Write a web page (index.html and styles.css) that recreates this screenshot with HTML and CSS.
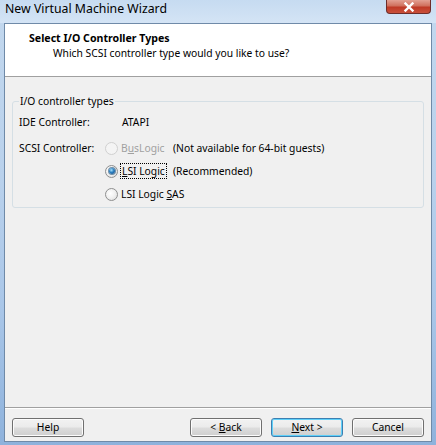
FILE: index.html
```html
<!DOCTYPE html>
<html>
<head>
<meta charset="utf-8">
<link rel="stylesheet" href="styles.css">
</head>
<body>
<div class="window">
  <div class="titlebar">
    <span class="title">New Virtual Machine Wizard</span>
    <div class="close"><svg width="14" height="10" viewBox="0 0 14 10"><path d="M3.5 1.5 L10.5 8.5 M10.5 1.5 L3.5 8.5" stroke="#fff" stroke-width="2.4" stroke-linecap="square"/></svg></div>
  </div>
  <div class="client">
    <div class="header">
      <div class="h-title">Select I/O Controller Types</div>
      <div class="h-sub">Which SCSI controller type would you like to use?</div>
    </div>
    <div class="main">
      <fieldset class="group">
        <legend>I/O controller types</legend>
        <div class="grid">
          <div class="lbl">IDE Controller:</div>
          <div class="val">ATAPI</div>
          <div class="lbl r2">SCSI Controller:</div>
          <div class="opt disabled r2 c2"><span class="radio"></span><span>B<span class="u">u</span>sLogic</span></div>
          <div class="note r2">(Not available for 64-bit guests)</div>
          <div class="opt r3 c2"><span class="radio checked"><span class="dot"></span></span><span class="focus"><span class="u">L</span>SI Logic</span></div>
          <div class="note r3">(Recommended)</div>
          <div class="opt r4 span"><span class="radio"></span><span>LSI Logic <span class="u">S</span>AS</span></div>
        </div>
      </fieldset>
    </div>
    <div class="footer">
      <button class="btn">Help</button>
      <div class="spacer"></div>
      <button class="btn">&lt; <span class="u">B</span>ack</button>
      <button class="btn default"><span class="u">N</span>ext &gt;</button>
      <button class="btn">Cancel</button>
    </div>
  </div>
</div>
</body>
</html>
```
FILE: styles.css
```css
html, body {
  margin: 0;
  padding: 0;
}
body {
  width: 436px;
  height: 445px;
  overflow: hidden;
  font-family: "Noto Sans", "Open Sans", sans-serif;
  font-size: 10.3px;
  color: #000;
}
.window {
  width: 436px;
  height: 445px;
  display: flex;
  flex-direction: column;
  background: linear-gradient(to bottom, #c3d8ee 0%, #b9d1ec 40%, #a9c6e8 70%, #8eb2dc 100%);
}
.titlebar {
  height: 23px;
  display: flex;
  align-items: flex-start;
  background: linear-gradient(to bottom, #c6dbf1, #d4e4f5);
}
.title {
  padding-left: 5px;
  padding-top: 1px;
  font-size: 12.3px;
  line-height: 15px;
  color: #000;
}
.close {
  margin-left: auto;
  margin-right: 5px;
  width: 45px;
  height: 14px;
  border: 1px solid #6d2d2a;
  border-top: none;
  border-radius: 0 0 4px 4px;
  background: linear-gradient(to bottom, #e3a193 0%, #d0705d 45%, #bf3a26 55%, #c9503b 100%);
  display: flex;
  align-items: center;
  justify-content: center;
  box-sizing: border-box;
}
.close svg { display: block; }
.client {
  flex: 1;
  margin: 0 4px 3px 4px;
  border: 1px solid #6f8aa8;
  display: flex;
  flex-direction: column;
  background: #f0f0f0;
}
.header {
  height: 52px;
  background: #fff;
  border-bottom: 1px solid #a0a0a0;
  padding-left: 24px;
}
.h-title {
  font-weight: bold;
  padding-top: 7px;
  line-height: 15px;
  font-size: 10.6px;
}
.h-sub {
  padding-left: 24px;
  line-height: 15px;
}
.main {
  flex: 1;
  padding: 17px 7px 0 7px;
  border-bottom: 1px solid #a0a0a0;
}
.group {
  margin: 0;
  padding: 0 0 0 6px;
  border: 1px solid #d5dfe5;
  border-radius: 3px;
  height: 114px;
  box-sizing: border-box;
  min-width: 0;
}
.group legend {
  padding: 0 1px;
  line-height: 14px;
  margin-left: 0;
}
.grid {
  display: grid;
  grid-template-columns: 86px 68px 1fr;
  grid-template-rows: 28px 24px 22px 24px;
  align-items: center;
  margin-top: 0;
}
.lbl { grid-column: 1; }
.val { grid-column: 2 / 4; padding-left: 17px; }
.r2 { grid-row: 2; }
.r3 { grid-row: 3; }
.r4 { grid-row: 4; }
.c2 { grid-column: 2; }
.span { grid-column: 2 / 4; }
.opt {
  display: flex;
  align-items: center;
  gap: 3px;
  white-space: nowrap;
}
.note { grid-column: 3; padding-left: 0; white-space: nowrap; }
.disabled { color: #a0a0a0; }
.u { text-decoration: underline; }
.radio {
  width: 11px;
  height: 11px;
  border: 1px solid #8e8f8f;
  border-radius: 50%;
  background: radial-gradient(circle at 40% 40%, #ffffff 0%, #f0f0f0 50%, #d8d8d8 100%);
  display: inline-flex;
  align-items: center;
  justify-content: center;
  flex: none;
}
.disabled .radio {
  border-color: #d0d0d0;
  background: #f4f4f4;
}
.radio .dot {
  width: 6px;
  height: 6px;
  border-radius: 50%;
  background: radial-gradient(circle at 40% 35%, #a8e2fb 0%, #2a7ec0 45%, #17467a 100%);
  box-shadow: 0 0 0 1px #6f8fa8;
}
.focus {
  outline: 1px dotted #000;
  outline-offset: 0;
  padding: 0 1px;
}
.footer {
  height: 33px;
  display: flex;
  align-items: flex-start;
  padding: 9px 7px 0 7px;
  box-sizing: border-box;
  gap: 9px;
  border-top: 1px solid #fff;
}
.spacer { flex: 1; }
.btn {
  width: 72px;
  height: 19px;
  margin: 0;
  padding: 0;
  font-family: inherit;
  font-size: 10.3px;
  color: #000;
  border: 1px solid #707070;
  border-radius: 3px;
  background: linear-gradient(to bottom, #f2f2f2 0%, #ebebeb 49%, #dddddd 51%, #cfcfcf 100%);
  box-shadow: inset 0 0 0 1px #fcfcfc;
  line-height: 15px;
}
.btn.default {
  border-color: #3c7fb1;
  box-shadow: inset 0 0 0 1px #5fd0f9;
}
```
